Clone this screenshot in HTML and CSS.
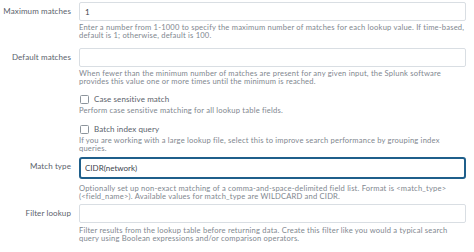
FILE: index.html
```html
<!DOCTYPE html>
<html lang="en">
<head>
    <meta charset="UTF-8">
    <meta name="viewport" content="width=device-width, initial-scale=1.0">
    <title>Lookup options</title>
    <link rel="stylesheet" href="styles.css">
</head>
<body>

    <form class="lookup-form">

        <!-- Maximum matches -->
        <div class="control-group">
            <label class="control-label">Maximum matches</label>
            <div class="controls">
                <input class="text-input" type="text" value="1">
                <p class="help-block">Enter a number from 1-1000 to specify the maximum number of matches for each lookup value. If time-based, default is 1; otherwise, default is 100.</p>
            </div>
        </div>

        <!-- Default matches -->
        <div class="control-group">
            <label class="control-label">Default matches</label>
            <div class="controls">
                <input class="text-input" type="text" value="">
                <p class="help-block">When fewer than the minimum number of matches are present for any given input, the Splunk software provides this value one or more times until the minimum is reached.</p>
            </div>
        </div>

        <!-- Case sensitive -->
        <div class="control-group check-group">
            <span class="control-label"></span>
            <div class="controls">
                <label class="checkbox"><span class="check-box"></span>Case sensitive match</label>
                <p class="help-block">Perform case sensitive matching for all lookup table fields.</p>
            </div>
        </div>

        <!-- Batch index query -->
        <div class="control-group check-group batch">
            <span class="control-label"></span>
            <div class="controls">
                <label class="checkbox"><span class="check-box"></span>Batch index query</label>
                <p class="help-block">If you are working with a large lookup file, select this to improve search performance by grouping index queries.</p>
            </div>
        </div>

        <!-- Match type -->
        <div class="control-group match">
            <label class="control-label">Match type</label>
            <div class="controls">
                <input class="text-input focused" type="text" value="CIDR(network)">
                <p class="help-block">Optionally set up non-exact matching of a comma-and-space-delimited field list. Format is &lt;match_type&gt; (&lt;field_name&gt;). Available values for match_type are WILDCARD and CIDR.</p>
            </div>
        </div>

        <!-- Filter lookup -->
        <div class="control-group filter">
            <label class="control-label">Filter lookup</label>
            <div class="controls">
                <input class="text-input" type="text" value="">
                <p class="help-block">Filter results from the lookup table before returning data. Create this filter like you would a typical search query using Boolean expressions and/or comparison operators.</p>
            </div>
        </div>

    </form>

</body>
</html>
```

FILE: styles.css
```css
/* Global Styles */
body {
    font-family: Lato, "Open Sans", sans-serif;
    margin: 0;
    padding: 0;
    background-color: #fff;
    color: #3c444d;
}

.lookup-form {
    padding: 2px 8px 0 0;
}

/* Rows */
.control-group {
    display: flex;
    margin-bottom: 9px;
}

.control-label {
    width: 71px;
    flex-shrink: 0;
    padding-right: 8px;
    text-align: right;
    font-size: 8px;
    line-height: 19px;
    color: #5a626b;
    letter-spacing: 0.1px;
}

.controls {
    flex: 1;
    min-width: 0;
}

/* Inputs */
.text-input {
    display: block;
    width: 100%;
    box-sizing: border-box;
    height: 19px;
    margin: 0;
    padding: 0 5px;
    border: 1px solid #d9dee3;
    border-radius: 2px;
    font-family: inherit;
    font-size: 8px;
    color: #3c444d;
    background: #fff;
    outline: none;
}

.text-input.focused {
    height: 22px;
    border: 2px solid #1f5f8b;
    border-radius: 3px;
    padding: 0 4px;
}

.help-block {
    margin: 2px 0 0;
    font-size: 7.6px;
    line-height: 8px;
    color: #7f878f;
    letter-spacing: 0.19px;
}

/* Checkboxes */
.check-group {
    margin-bottom: 10px;
}

.check-group.batch {
    margin-bottom: 5px;
}

.checkbox {
    display: flex;
    align-items: center;
    height: 10px;
    font-size: 8px;
    color: #5a626b;
    letter-spacing: 0.1px;
}

.check-box {
    width: 7px;
    height: 7px;
    margin: 0 5px 0 1px;
    border: 1px solid #8c949c;
    border-radius: 1.5px;
    background: #fff;
}

.match {
    margin-bottom: 4px;
}

.match .help-block {
    margin-top: 5px;
}

.filter .help-block {
    margin-top: 3px;
}
```
